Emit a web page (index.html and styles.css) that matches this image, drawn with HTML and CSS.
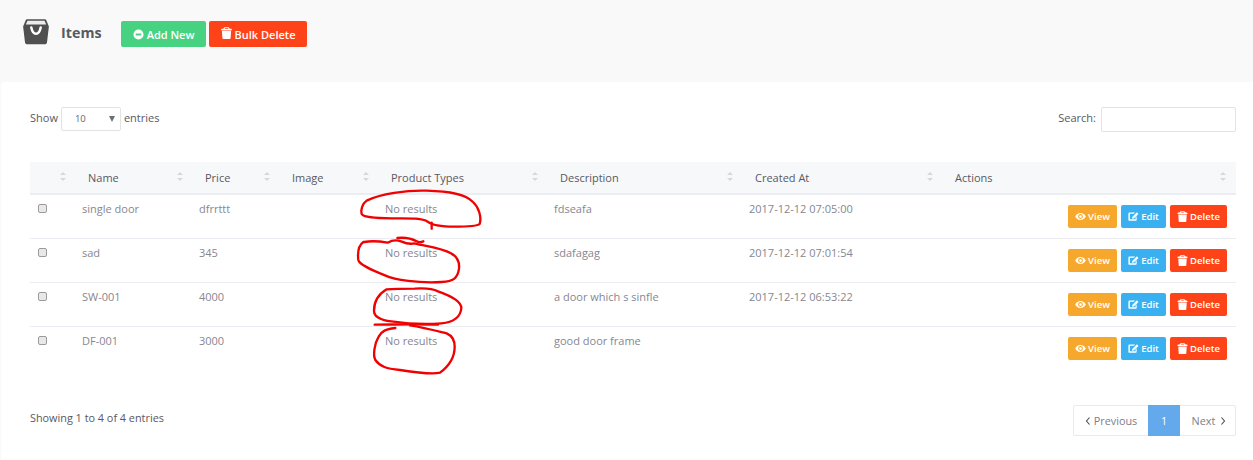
FILE: index.html
```html
<!DOCTYPE html>
<html lang="en">
<head>
<meta charset="utf-8">
<title>Items</title>
<link rel="stylesheet" href="styles.css">
</head>
<body>
<svg class="defs" width="0" height="0" aria-hidden="true">
  <symbol id="i-eye" viewBox="0 0 16 12"><path fill-rule="evenodd" d="M8 1C4.600 1 1.800 3 .3 6c1.500 3 4.300 5 7.700 5s6.200-2 7.700-5C14.200 3 11.400 1 8 1zm0 1.500A3.500 3.500 0 1 1 8 9.500a3.500 3.500 0 0 1 0-7zM8 4a2 2 0 1 0 0 4 2 2 0 0 0 0-4z"/></symbol>
  <symbol id="i-edit" viewBox="0 0 14 12"><path d="M2 1h7L7.600 2.400H2.400v7.200h7.200V7L11 5.600V10a1.500 1.500 0 0 1-1.500 1.500h-7.500A1.500 1.500 0 0 1 .5 10V2.500A1.500 1.500 0 0 1 2 1z"/><path d="M11.300.7l2 2L7.500 8.500 5 9l.5-2.500z"/></symbol>
  <symbol id="i-trash" viewBox="0 0 12 13"><path fill-rule="evenodd" d="M4.200.2h3.600c.6 0 1 .3 1.200.8l.4.9H11c.5 0 .9.300.9.800v.7H.1v-.7c0-.5.4-.8.9-.8h1.600l.4-.9c.2-.5.6-.8 1.200-.8zM4.300 1.100l-.3.800h4l-.3-.8zM1 4h10l-.5 8c0 .6-.5 1-1 1h-7c-.5 0-1-.4-1-1z"/></symbol>
  <symbol id="i-minus" viewBox="0 0 12 12"><path fill-rule="evenodd" d="M6 .5a5.500 5.500 0 1 1 0 11 5.500 5.500 0 0 1 0-11zM3 5v2h6V5z"/></symbol>
</svg>

<header class="page-head">
  <svg class="logo" width="28" height="28" viewBox="0 0 28 28" aria-hidden="true">
    <path fill="#505050" d="M4 .3h18c.6 0 1 .3 1.200.8l2.500 6c.2.400.2.800.1 1.200l-1.800 15.200c-.2 1.200-1 1.800-2.100 1.800H4.100c-1.100 0-1.900-.6-2.100-1.800L.2 8.300C.1 7.900.1 7.500.3 7.100l2.500-6C3 .6 3.400.3 4 .3z"/>
    <path fill="#ededed" d="M4.500 1.800h17l1.700 3.700H2.800z"/>
    <path fill="none" stroke="#fff" stroke-width="2.500" stroke-linecap="round" d="M8.300 8.500c.8 3.800 2.500 6.300 4.700 6.300s3.900-2.500 4.700-6.300"/>
  </svg>
  <h1 class="page-title">Items</h1>
  <div class="head-actions">
    <a class="btn btn-lg btn-green"><svg class="ico"><use href="#i-minus"/></svg>Add New</a>
    <a class="btn btn-lg btn-red"><svg class="ico ico-up"><use href="#i-trash"/></svg>Bulk Delete</a>
  </div>
</header>

<main class="card">
  <div class="table-top">
    <label class="length"><span class="lift">Show</span>
      <span class="select"><span class="select-value">10</span><i class="caret"></i></span>
      <span class="lift">entries</span></label>
    <label class="search"><span class="lift">Search:</span> <input class="search-input" type="text"></label>
  </div>

  <table class="data">
    <colgroup>
      <col class="c1"><col class="c2"><col class="c3"><col class="c4"><col class="c5"><col class="c6"><col class="c7"><col class="c8">
    </colgroup>
    <thead>
      <tr>
        <th><i class="sort"></i></th>
        <th>Name<i class="sort"></i></th>
        <th>Price<i class="sort"></i></th>
        <th>Image<i class="sort"></i></th>
        <th>Product Types<i class="sort"></i></th>
        <th>Description<i class="sort"></i></th>
        <th>Created At<i class="sort"></i></th>
        <th>Actions<i class="sort"></i></th>
      </tr>
    </thead>
    <tbody>
      <tr>
        <td><i class="box"></i></td><td>single door</td><td>dfrrttt</td><td></td><td>No results</td><td>fdseafa</td><td>2017-12-12 07:05:00</td>
        <td class="acts-cell"><div class="acts"><a class="btn btn-sm btn-amber"><svg class="ico"><use href="#i-eye"/></svg>View</a><a class="btn btn-sm btn-blue"><svg class="ico"><use href="#i-edit"/></svg>Edit</a><a class="btn btn-sm btn-red"><svg class="ico"><use href="#i-trash"/></svg>Delete</a></div></td>
      </tr>
      <tr>
        <td><i class="box"></i></td><td>sad</td><td>345</td><td></td><td>No results</td><td>sdafagag</td><td>2017-12-12 07:01:54</td>
        <td class="acts-cell"><div class="acts"><a class="btn btn-sm btn-amber"><svg class="ico"><use href="#i-eye"/></svg>View</a><a class="btn btn-sm btn-blue"><svg class="ico"><use href="#i-edit"/></svg>Edit</a><a class="btn btn-sm btn-red"><svg class="ico"><use href="#i-trash"/></svg>Delete</a></div></td>
      </tr>
      <tr>
        <td><i class="box"></i></td><td>SW-001</td><td>4000</td><td></td><td>No results</td><td>a door which s sinfle</td><td>2017-12-12 06:53:22</td>
        <td class="acts-cell"><div class="acts"><a class="btn btn-sm btn-amber"><svg class="ico"><use href="#i-eye"/></svg>View</a><a class="btn btn-sm btn-blue"><svg class="ico"><use href="#i-edit"/></svg>Edit</a><a class="btn btn-sm btn-red"><svg class="ico"><use href="#i-trash"/></svg>Delete</a></div></td>
      </tr>
      <tr>
        <td><i class="box"></i></td><td>DF-001</td><td>3000</td><td></td><td>No results</td><td>good door frame</td><td></td>
        <td class="acts-cell"><div class="acts"><a class="btn btn-sm btn-amber"><svg class="ico"><use href="#i-eye"/></svg>View</a><a class="btn btn-sm btn-blue"><svg class="ico"><use href="#i-edit"/></svg>Edit</a><a class="btn btn-sm btn-red"><svg class="ico"><use href="#i-trash"/></svg>Delete</a></div></td>
      </tr>
    </tbody>
  </table>

  <div class="table-bottom">
    <div class="info">Showing 1 to 4 of 4 entries</div>
    <nav class="pager">
      <a class="page prev"><svg class="chev" viewBox="0 0 6 10"><path d="M4.500 1.500 1.500 5l3 3.500"/></svg>Previous</a>
      <a class="page current">1</a>
      <a class="page next">Next<svg class="chev" viewBox="0 0 6 10"><path d="M1.500 1.500 4.500 5l-3 3.500"/></svg></a>
    </nav>
  </div>
</main>

<svg class="scribble" viewBox="0 0 450 600" aria-hidden="true">
  <g fill="none" stroke="#f00000" stroke-width="7" stroke-linecap="round" stroke-linejoin="round">
    <path d="M50 62C36 72 32 90 35 102c5 10 40 12 90 13 50 0 90-2 108 10 12 10 40 15 80 15 30 0 70-2 76-8 6-20-2-50-20-66C346 42 300 34 230 32 170 30 90 42 50 62z"/>
    <path d="M245 128v18"/>
    <path d="M40 186C26 196 22 215 25 240c3 14 40 30 80 46 30 14 100 24 170 20 34-2 48-10 52-40 2-20-4-36-24-46-30-16-70-20-110-30-14 4-26 0-40-6-12-4-26-4-40 4-34-6-50-6-70-2z"/>
    <path d="M142 174c20-2 40 0 58 10 6 4 12 4 20 0"/>
    <path d="M110 328C90 340 72 362 72 392c0 18 20 28 52 32 40 6 100 10 150 6 40-4 58-20 60-46 0-20-30-36-70-50-20-10-40-10-70-8-30 0-60 0-84 2z"/>
    <path d="M74 434c50 0 130-2 190 0"/>
    <path d="M180 436c40 6 70 14 110 24 14 6 24 20 24 40 0 34-20 60-44 78-20 6-70 0-120-8-40-4-60-10-74-30-8-16-2-50 10-70 10-18 20-22 50-26"/>
  </g>
</svg>
</body>
</html>
```
FILE: styles.css
```css
* { box-sizing: border-box; }
html, body { margin: 0; padding: 0; }
body {
  width: 1253px;
  height: 460px;
  overflow: hidden;
  position: relative;
  background: #f9f9f9;
  font-family: "Open Sans", sans-serif;
  font-size: 11px;
  color: #666;
}
.defs { position: absolute; }

.page-head {
  height: 82px;
  padding: 19px 0 0 23px;
  display: flex;
  align-items: flex-start;
}
.logo { flex: none; overflow: visible; margin-right: 10px; }
.page-title {
  margin: 6px 19px 0 0;
  width: 41px;
  font-size: 14.300px;
  line-height: 16px;
  font-weight: 700;
  color: #575962;
}
.head-actions { display: flex; gap: 3px; margin-top: 2px; }

.btn {
  display: inline-flex;
  align-items: center;
  justify-content: center;
  color: #fff;
  border-radius: 2px;
  font-weight: 600;
}
.btn-lg { height: 26px; font-size: 11px; }
.btn-lg .ico { width: 11px; height: 11px; margin-right: 3px; }
.btn-lg .ico-up { height: 12px; margin-bottom: 3px; }
.btn-sm { height: 23px; font-size: 9.500px; }
.btn-sm .ico { width: 11px; height: 11px; margin-right: 2px; margin-bottom: 1px; }
.ico { fill: currentColor; flex: none; }
.btn-green { background: #47d282; width: 85px; }
.btn-red { background: #ff4319; }
.head-actions .btn-red { width: 98px; }
.btn-amber { background: #f6a82d; width: 49px; }
.btn-blue { background: #3bb0f0; width: 45px; }
.acts .btn-red { width: 57px; }

.card {
  margin-left: 1px;
  height: 378px;
  background: #fff;
  border-top-left-radius: 3px;
  padding: 25px 17px 0 29px;
}
.table-top {
  display: flex;
  justify-content: space-between;
  align-items: center;
  height: 24px;
}
.lift { margin-bottom: 4px; }
.length { display: flex; align-items: center; gap: 3px; color: #575962; }
.select {
  width: 60px;
  height: 24px;
  border: 1px solid #e3e3e3;
  border-radius: 2px;
  display: flex;
  align-items: center;
  justify-content: space-between;
  padding: 0 5px 0 13px;
  font-size: 9.500px;
  color: #666;
}
.select-value { margin-bottom: 1px; }
.caret {
  width: 0;
  height: 0;
  border-left: 3px solid transparent;
  border-right: 3px solid transparent;
  border-top: 6px solid #6c6f78;
}
.search { display: flex; align-items: center; gap: 5px; color: #575962; }
.search-input {
  width: 135px;
  height: 25px;
  border: 1px solid #e3e3e3;
  border-radius: 2px;
  background: #fff;
  margin: 0;
  padding: 0;
}

.data {
  margin-top: 31px;
  width: 1206px;
  border-collapse: separate;
  border-spacing: 0;
  table-layout: fixed;
}
.c1 { width: 46px; }
.c2 { width: 117px; }
.c3 { width: 87px; }
.c4 { width: 99px; }
.c5 { width: 169px; }
.c6 { width: 195px; }
.c7 { width: 200px; }
.c8 { width: 293px; }

.data th {
  position: relative;
  height: 33px;
  padding: 0 12px 1px;
  text-align: left;
  font-weight: 400;
  color: #575962;
  background: #f7f8fa;
  border-bottom: 2px solid #ebedf2;
}
.sort {
  position: absolute;
  right: 10px;
  top: 10px;
  width: 6px;
  height: 9px;
}
.sort::before, .sort::after {
  content: "";
  position: absolute;
  left: 0;
  border-left: 3px solid transparent;
  border-right: 3px solid transparent;
}
.sort::before { top: 0; border-bottom: 3.500px solid #d6d8dc; }
.sort::after { bottom: 0; border-top: 3.500px solid #d6d8dc; }

.data td {
  height: 44px;
  padding: 6px 6px 0;
  vertical-align: top;
  line-height: 15px;
  color: #858792;
  border-bottom: 1px solid #ebedf2;
}
.data tbody tr:last-child td { border-bottom: 0; }
.box {
  display: block;
  width: 9px;
  height: 9px;
  margin: 3px 0 0 2px;
  background: #e8e8e8;
  border: 1px solid #9b9b9b;
  border-radius: 2px;
}
.data td.acts-cell { padding: 10px 9px 0 0; }
.acts {
  display: flex;
  justify-content: flex-end;
  gap: 4px;
}

.table-bottom {
  display: flex;
  justify-content: space-between;
  align-items: center;
  margin-top: 34px;
  height: 31px;
}
.info { color: #575962; font-size: 10.850px; margin-bottom: 6px; }
.pager {
  display: flex;
  height: 31px;
  border: 1px solid #e9e9ee;
  border-radius: 2px;
  color: #7b7e8a;
  font-size: 10.850px;
}
.page { display: flex; align-items: center; justify-content: center; height: 29px; }
.prev { width: 74px; gap: 3px; }
.current { width: 32px; height: 31px; margin-top: -1px; background: #64a9ec; color: #fff; }
.next { width: 55px; gap: 5px; padding-left: 3px; }
.chev { width: 6px; height: 10px; fill: none; stroke: #444a55; stroke-width: 1.100; }

.scribble {
  position: absolute;
  left: 350px;
  top: 180px;
  width: 150px;
  height: 200px;
  overflow: visible;
}
```
